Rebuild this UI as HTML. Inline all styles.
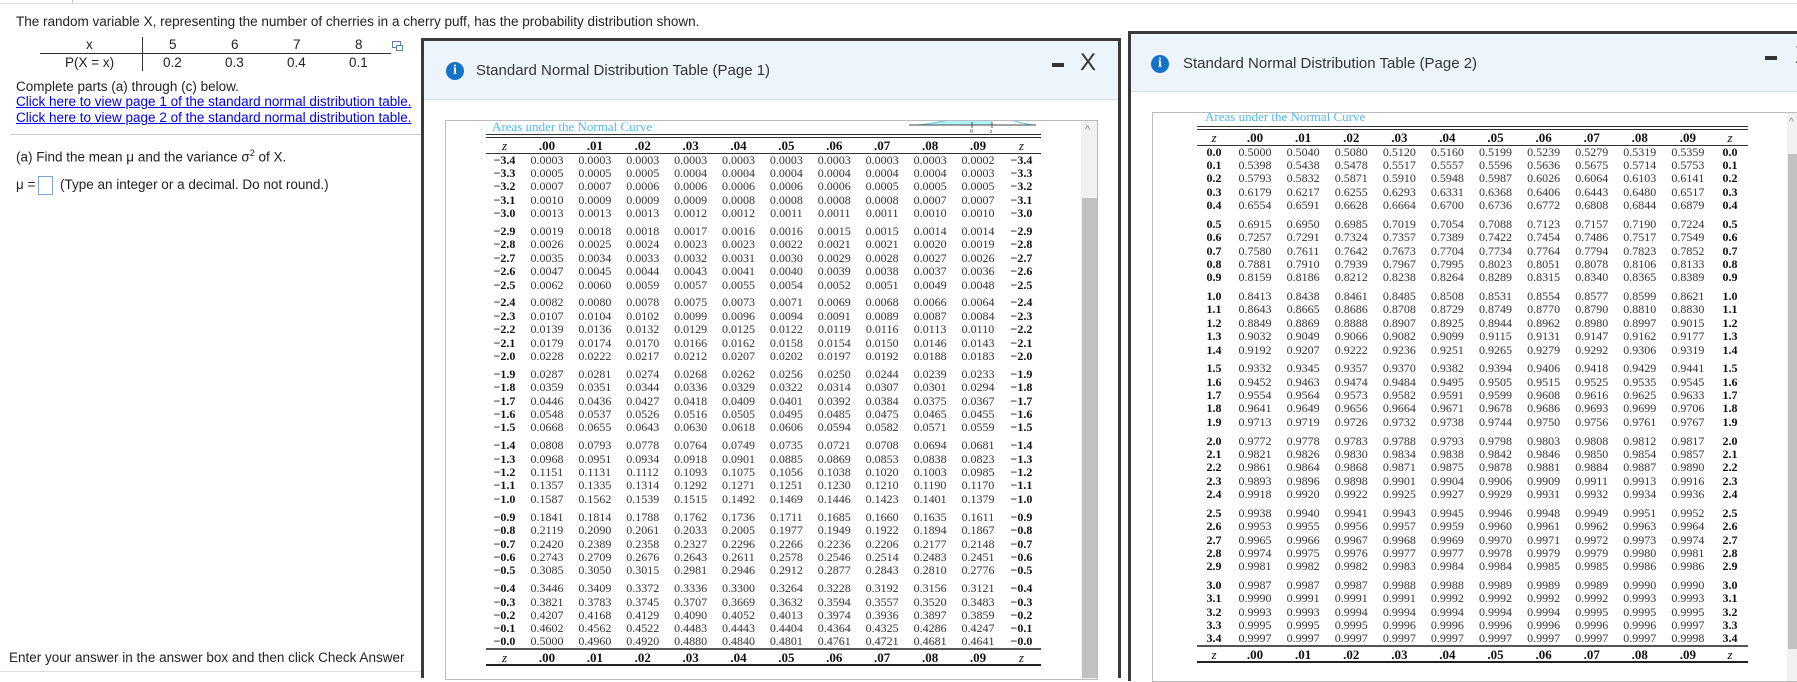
<!DOCTYPE html>
<html><head><meta charset="utf-8"><style>
*{margin:0;padding:0;box-sizing:border-box}
body{width:1797px;height:673px;overflow:hidden;background:#fff;position:relative;font-family:"Liberation Sans",Arial,sans-serif;color:#222}
.a{position:absolute;white-space:nowrap}
.t{font-size:13.5px;line-height:16px}
a{color:#0000ee;text-decoration:underline}
.dlg{position:absolute;background:#fff;border:3px solid #3a3a3a;border-right:none;border-bottom:none;overflow:hidden}
.hdr{position:absolute;left:0;right:0;top:0;background:#eef4fb;border-bottom:1px solid #cfdff0}
.info{position:absolute;width:18px;height:18px;border-radius:50%;background:#1473c9;color:#fff;font:bold 14px/18px "Liberation Serif",serif;text-align:center}
.ttl{position:absolute;font-size:15px;color:#333;white-space:nowrap}
.box{position:absolute;border:1px solid #bbb;overflow:hidden;background:#fff}
table{border-collapse:collapse;table-layout:fixed;position:absolute;font-family:"Liberation Serif",serif;font-size:12px;color:#333}
td{padding:0;height:13.4px;line-height:13px;text-align:center;vertical-align:bottom}
tr.h td{height:17px;font-weight:bold;font-size:13px;color:#111;border-bottom:1px solid #333;vertical-align:middle}
tr.h td.z,tr.f td.z{font-style:italic;font-weight:normal}
tr.f td{height:16px;font-weight:bold;font-size:13px;color:#111;border-top:2px solid #555;border-bottom:2px solid #222;vertical-align:middle}
tr.g td{height:18.7px}
#t1 tr.g td{height:17.9px}
td.z{font-weight:bold;color:#111}
.dbl{border-top:4px double #333}
.areas{position:absolute;font-family:"Liberation Serif",serif;font-size:13px;color:#55b8f0}
.sb{position:absolute;background:#f1f1f1}
.th{position:absolute;background:#c1c1c1}
</style></head><body>

<div class="a" style="left:0;right:0;top:3px;height:1px;background:#ddd;width:1797px"></div>
<div class="a" style="left:72px;top:0;width:1px;height:3px;background:#ccc"></div>

<div class="a t" style="left:16px;top:14px">The random variable X, representing the number of cherries in a cherry puff, has the probability distribution shown.</div>

<div class="a" style="left:40px;top:53px;width:351px;height:1px;background:#333"></div>
<div class="a" style="left:142px;top:37px;width:1px;height:34px;background:#333"></div>
<div class="a t" style="left:86px;top:37px">x</div>
<div class="a t" style="left:65px;top:55px">P(X = x)</div>
<div class="a t" style="left:169px;top:37px">5</div>
<div class="a t" style="left:231px;top:37px">6</div>
<div class="a t" style="left:293px;top:37px">7</div>
<div class="a t" style="left:355px;top:37px">8</div>
<div class="a t" style="left:163px;top:55px">0.2</div>
<div class="a t" style="left:225px;top:55px">0.3</div>
<div class="a t" style="left:287px;top:55px">0.4</div>
<div class="a t" style="left:349px;top:55px">0.1</div>
<div class="a" style="left:392px;top:41px;width:9px;height:7px;border:1.5px solid #5a7fb0"></div>
<div class="a" style="left:396px;top:45px;width:7px;height:6px;border:1.5px solid #5a7fb0;background:#fff"></div>

<div class="a t" style="left:16px;top:79px">Complete parts (a) through (c) below.</div>
<div class="a t" style="left:16px;top:94px"><a>Click here to view page 1 of the standard normal distribution table.</a></div>
<div class="a t" style="left:16px;top:110px"><a>Click here to view page 2 of the standard normal distribution table.</a></div>
<div class="a" style="left:10px;top:134px;width:420px;height:1px;background:#ccc"></div>
<div class="a t" style="left:16px;top:145px">(a) Find the mean μ and the variance σ<sup style="font-size:9px">2</sup> of X.</div>
<div class="a t" style="left:16px;top:177px">μ =</div>
<div class="a" style="left:38px;top:176px;width:15px;height:19px;border:1px solid #7aa7d6"></div>
<div class="a t" style="left:60px;top:177px">(Type an integer or a decimal. Do not round.)</div>
<div class="a t" style="left:9px;top:650px">Enter your answer in the answer box and then click Check Answer</div>
<div class="a" style="left:0;top:671px;width:421px;height:1px;background:#ddd"></div>

<!-- Dialog 1 -->
<div class="dlg" style="left:421px;top:38px;width:700px;height:640px;border-right:3px solid #3a3a3a">
 <div class="hdr" style="height:59px"></div>
 <div class="info" style="left:22px;top:21px">i</div>
 <div class="ttl" style="left:52px;top:21px">Standard Normal Distribution Table (Page 1)</div>
 <div class="a" style="left:628px;top:22px;width:12px;height:4px;background:#333"></div>
 <div class="a" style="left:656px;top:8px;font-size:24px;color:#333">X</div>
</div>
<div class="box" style="left:445px;top:120px;width:653px;height:560px">
 <div class="areas" style="left:46px;top:-2px">Areas under the Normal Curve</div>
 <svg class="a" style="left:460px;top:0" width="140" height="16"><path d="M10 4 C25 3 35 0 45 0 L86 0 L86 4 Z" fill="#aef3fb"/><path d="M10 4 C25 3 35 0 45 -1 M105 -1 C112 1 118 3 128 4" fill="none" stroke="#6cc6e6" stroke-width="1"/><line x1="3" y1="4" x2="130" y2="4" stroke="#444"/><line x1="66" y1="1" x2="66" y2="7" stroke="#555"/><line x1="86" y1="1" x2="86" y2="7" stroke="#555"/><text x="64" y="12" font-size="6" font-family="Liberation Serif" fill="#333">0</text><text x="84" y="12" font-size="6" font-style="italic" font-family="Liberation Serif" fill="#333">z</text></svg>
 <div class="sb" style="left:635px;top:0;width:17px;height:560px"></div>
 <div class="th" style="left:636px;top:77px;width:15px;height:480px"></div>
 <div class="a" style="left:639px;top:3px;font-size:11px;color:#888">^</div>
 <table id="t1" style="left:40px;top:13px;width:555px" class="dbl">
 <colgroup><col style="width:37px"><col span="10" style="width:47.9px"><col style="width:39px"></colgroup>
 <tr class="h"><td class="z">z</td><td>.00</td><td>.01</td><td>.02</td><td>.03</td><td>.04</td><td>.05</td><td>.06</td><td>.07</td><td>.08</td><td>.09</td><td class="z">z</td></tr>
 <tr><td class="z">−3.4</td><td>0.0003</td><td>0.0003</td><td>0.0003</td><td>0.0003</td><td>0.0003</td><td>0.0003</td><td>0.0003</td><td>0.0003</td><td>0.0003</td><td>0.0002</td><td class="z">−3.4</td></tr>
 <tr><td class="z">−3.3</td><td>0.0005</td><td>0.0005</td><td>0.0005</td><td>0.0004</td><td>0.0004</td><td>0.0004</td><td>0.0004</td><td>0.0004</td><td>0.0004</td><td>0.0003</td><td class="z">−3.3</td></tr>
 <tr><td class="z">−3.2</td><td>0.0007</td><td>0.0007</td><td>0.0006</td><td>0.0006</td><td>0.0006</td><td>0.0006</td><td>0.0006</td><td>0.0005</td><td>0.0005</td><td>0.0005</td><td class="z">−3.2</td></tr>
 <tr><td class="z">−3.1</td><td>0.0010</td><td>0.0009</td><td>0.0009</td><td>0.0009</td><td>0.0008</td><td>0.0008</td><td>0.0008</td><td>0.0008</td><td>0.0007</td><td>0.0007</td><td class="z">−3.1</td></tr>
 <tr><td class="z">−3.0</td><td>0.0013</td><td>0.0013</td><td>0.0013</td><td>0.0012</td><td>0.0012</td><td>0.0011</td><td>0.0011</td><td>0.0011</td><td>0.0010</td><td>0.0010</td><td class="z">−3.0</td></tr>
 <tr class="g"><td class="z">−2.9</td><td>0.0019</td><td>0.0018</td><td>0.0018</td><td>0.0017</td><td>0.0016</td><td>0.0016</td><td>0.0015</td><td>0.0015</td><td>0.0014</td><td>0.0014</td><td class="z">−2.9</td></tr>
 <tr><td class="z">−2.8</td><td>0.0026</td><td>0.0025</td><td>0.0024</td><td>0.0023</td><td>0.0023</td><td>0.0022</td><td>0.0021</td><td>0.0021</td><td>0.0020</td><td>0.0019</td><td class="z">−2.8</td></tr>
 <tr><td class="z">−2.7</td><td>0.0035</td><td>0.0034</td><td>0.0033</td><td>0.0032</td><td>0.0031</td><td>0.0030</td><td>0.0029</td><td>0.0028</td><td>0.0027</td><td>0.0026</td><td class="z">−2.7</td></tr>
 <tr><td class="z">−2.6</td><td>0.0047</td><td>0.0045</td><td>0.0044</td><td>0.0043</td><td>0.0041</td><td>0.0040</td><td>0.0039</td><td>0.0038</td><td>0.0037</td><td>0.0036</td><td class="z">−2.6</td></tr>
 <tr><td class="z">−2.5</td><td>0.0062</td><td>0.0060</td><td>0.0059</td><td>0.0057</td><td>0.0055</td><td>0.0054</td><td>0.0052</td><td>0.0051</td><td>0.0049</td><td>0.0048</td><td class="z">−2.5</td></tr>
 <tr class="g"><td class="z">−2.4</td><td>0.0082</td><td>0.0080</td><td>0.0078</td><td>0.0075</td><td>0.0073</td><td>0.0071</td><td>0.0069</td><td>0.0068</td><td>0.0066</td><td>0.0064</td><td class="z">−2.4</td></tr>
 <tr><td class="z">−2.3</td><td>0.0107</td><td>0.0104</td><td>0.0102</td><td>0.0099</td><td>0.0096</td><td>0.0094</td><td>0.0091</td><td>0.0089</td><td>0.0087</td><td>0.0084</td><td class="z">−2.3</td></tr>
 <tr><td class="z">−2.2</td><td>0.0139</td><td>0.0136</td><td>0.0132</td><td>0.0129</td><td>0.0125</td><td>0.0122</td><td>0.0119</td><td>0.0116</td><td>0.0113</td><td>0.0110</td><td class="z">−2.2</td></tr>
 <tr><td class="z">−2.1</td><td>0.0179</td><td>0.0174</td><td>0.0170</td><td>0.0166</td><td>0.0162</td><td>0.0158</td><td>0.0154</td><td>0.0150</td><td>0.0146</td><td>0.0143</td><td class="z">−2.1</td></tr>
 <tr><td class="z">−2.0</td><td>0.0228</td><td>0.0222</td><td>0.0217</td><td>0.0212</td><td>0.0207</td><td>0.0202</td><td>0.0197</td><td>0.0192</td><td>0.0188</td><td>0.0183</td><td class="z">−2.0</td></tr>
 <tr class="g"><td class="z">−1.9</td><td>0.0287</td><td>0.0281</td><td>0.0274</td><td>0.0268</td><td>0.0262</td><td>0.0256</td><td>0.0250</td><td>0.0244</td><td>0.0239</td><td>0.0233</td><td class="z">−1.9</td></tr>
 <tr><td class="z">−1.8</td><td>0.0359</td><td>0.0351</td><td>0.0344</td><td>0.0336</td><td>0.0329</td><td>0.0322</td><td>0.0314</td><td>0.0307</td><td>0.0301</td><td>0.0294</td><td class="z">−1.8</td></tr>
 <tr><td class="z">−1.7</td><td>0.0446</td><td>0.0436</td><td>0.0427</td><td>0.0418</td><td>0.0409</td><td>0.0401</td><td>0.0392</td><td>0.0384</td><td>0.0375</td><td>0.0367</td><td class="z">−1.7</td></tr>
 <tr><td class="z">−1.6</td><td>0.0548</td><td>0.0537</td><td>0.0526</td><td>0.0516</td><td>0.0505</td><td>0.0495</td><td>0.0485</td><td>0.0475</td><td>0.0465</td><td>0.0455</td><td class="z">−1.6</td></tr>
 <tr><td class="z">−1.5</td><td>0.0668</td><td>0.0655</td><td>0.0643</td><td>0.0630</td><td>0.0618</td><td>0.0606</td><td>0.0594</td><td>0.0582</td><td>0.0571</td><td>0.0559</td><td class="z">−1.5</td></tr>
 <tr class="g"><td class="z">−1.4</td><td>0.0808</td><td>0.0793</td><td>0.0778</td><td>0.0764</td><td>0.0749</td><td>0.0735</td><td>0.0721</td><td>0.0708</td><td>0.0694</td><td>0.0681</td><td class="z">−1.4</td></tr>
 <tr><td class="z">−1.3</td><td>0.0968</td><td>0.0951</td><td>0.0934</td><td>0.0918</td><td>0.0901</td><td>0.0885</td><td>0.0869</td><td>0.0853</td><td>0.0838</td><td>0.0823</td><td class="z">−1.3</td></tr>
 <tr><td class="z">−1.2</td><td>0.1151</td><td>0.1131</td><td>0.1112</td><td>0.1093</td><td>0.1075</td><td>0.1056</td><td>0.1038</td><td>0.1020</td><td>0.1003</td><td>0.0985</td><td class="z">−1.2</td></tr>
 <tr><td class="z">−1.1</td><td>0.1357</td><td>0.1335</td><td>0.1314</td><td>0.1292</td><td>0.1271</td><td>0.1251</td><td>0.1230</td><td>0.1210</td><td>0.1190</td><td>0.1170</td><td class="z">−1.1</td></tr>
 <tr><td class="z">−1.0</td><td>0.1587</td><td>0.1562</td><td>0.1539</td><td>0.1515</td><td>0.1492</td><td>0.1469</td><td>0.1446</td><td>0.1423</td><td>0.1401</td><td>0.1379</td><td class="z">−1.0</td></tr>
 <tr class="g"><td class="z">−0.9</td><td>0.1841</td><td>0.1814</td><td>0.1788</td><td>0.1762</td><td>0.1736</td><td>0.1711</td><td>0.1685</td><td>0.1660</td><td>0.1635</td><td>0.1611</td><td class="z">−0.9</td></tr>
 <tr><td class="z">−0.8</td><td>0.2119</td><td>0.2090</td><td>0.2061</td><td>0.2033</td><td>0.2005</td><td>0.1977</td><td>0.1949</td><td>0.1922</td><td>0.1894</td><td>0.1867</td><td class="z">−0.8</td></tr>
 <tr><td class="z">−0.7</td><td>0.2420</td><td>0.2389</td><td>0.2358</td><td>0.2327</td><td>0.2296</td><td>0.2266</td><td>0.2236</td><td>0.2206</td><td>0.2177</td><td>0.2148</td><td class="z">−0.7</td></tr>
 <tr><td class="z">−0.6</td><td>0.2743</td><td>0.2709</td><td>0.2676</td><td>0.2643</td><td>0.2611</td><td>0.2578</td><td>0.2546</td><td>0.2514</td><td>0.2483</td><td>0.2451</td><td class="z">−0.6</td></tr>
 <tr><td class="z">−0.5</td><td>0.3085</td><td>0.3050</td><td>0.3015</td><td>0.2981</td><td>0.2946</td><td>0.2912</td><td>0.2877</td><td>0.2843</td><td>0.2810</td><td>0.2776</td><td class="z">−0.5</td></tr>
 <tr class="g"><td class="z">−0.4</td><td>0.3446</td><td>0.3409</td><td>0.3372</td><td>0.3336</td><td>0.3300</td><td>0.3264</td><td>0.3228</td><td>0.3192</td><td>0.3156</td><td>0.3121</td><td class="z">−0.4</td></tr>
 <tr><td class="z">−0.3</td><td>0.3821</td><td>0.3783</td><td>0.3745</td><td>0.3707</td><td>0.3669</td><td>0.3632</td><td>0.3594</td><td>0.3557</td><td>0.3520</td><td>0.3483</td><td class="z">−0.3</td></tr>
 <tr><td class="z">−0.2</td><td>0.4207</td><td>0.4168</td><td>0.4129</td><td>0.4090</td><td>0.4052</td><td>0.4013</td><td>0.3974</td><td>0.3936</td><td>0.3897</td><td>0.3859</td><td class="z">−0.2</td></tr>
 <tr><td class="z">−0.1</td><td>0.4602</td><td>0.4562</td><td>0.4522</td><td>0.4483</td><td>0.4443</td><td>0.4404</td><td>0.4364</td><td>0.4325</td><td>0.4286</td><td>0.4247</td><td class="z">−0.1</td></tr>
 <tr><td class="z">−0.0</td><td>0.5000</td><td>0.4960</td><td>0.4920</td><td>0.4880</td><td>0.4840</td><td>0.4801</td><td>0.4761</td><td>0.4721</td><td>0.4681</td><td>0.4641</td><td class="z">−0.0</td></tr>
 <tr class="f"><td class="z">z</td><td>.00</td><td>.01</td><td>.02</td><td>.03</td><td>.04</td><td>.05</td><td>.06</td><td>.07</td><td>.08</td><td>.09</td><td class="z">z</td></tr>
 </table>
</div>

<!-- Dialog 2 -->
<div class="dlg" style="left:1128px;top:31px;width:680px;height:650px">
 <div class="hdr" style="height:58px"></div>
 <div class="info" style="left:20px;top:21px">i</div>
 <div class="ttl" style="left:52px;top:21px">Standard Normal Distribution Table (Page 2)</div>
 <div class="a" style="left:634px;top:22px;width:12px;height:4px;background:#333"></div>
 <div class="a" style="left:664px;top:8px;font-size:24px;color:#333">X</div>
</div>
<div class="box" style="left:1152px;top:112px;width:660px;height:570px;border-right:none">
 <div class="areas" style="left:52px;top:-4px">Areas under the Normal Curve</div>
 <div class="sb" style="left:634px;top:0;width:11px;height:570px"></div>
 <div class="th" style="left:635px;top:41px;width:10px;height:495px"></div>
 <div class="a" style="left:636px;top:4px;font-size:10px;color:#888">^</div>
 <table style="left:44px;top:13px;width:551px" class="dbl">
 <colgroup><col style="width:34px"><col span="10" style="width:48.1px"><col style="width:36px"></colgroup>
 <tr class="h"><td class="z">z</td><td>.00</td><td>.01</td><td>.02</td><td>.03</td><td>.04</td><td>.05</td><td>.06</td><td>.07</td><td>.08</td><td>.09</td><td class="z">z</td></tr>
 <tr><td class="z">0.0</td><td>0.5000</td><td>0.5040</td><td>0.5080</td><td>0.5120</td><td>0.5160</td><td>0.5199</td><td>0.5239</td><td>0.5279</td><td>0.5319</td><td>0.5359</td><td class="z">0.0</td></tr>
 <tr><td class="z">0.1</td><td>0.5398</td><td>0.5438</td><td>0.5478</td><td>0.5517</td><td>0.5557</td><td>0.5596</td><td>0.5636</td><td>0.5675</td><td>0.5714</td><td>0.5753</td><td class="z">0.1</td></tr>
 <tr><td class="z">0.2</td><td>0.5793</td><td>0.5832</td><td>0.5871</td><td>0.5910</td><td>0.5948</td><td>0.5987</td><td>0.6026</td><td>0.6064</td><td>0.6103</td><td>0.6141</td><td class="z">0.2</td></tr>
 <tr><td class="z">0.3</td><td>0.6179</td><td>0.6217</td><td>0.6255</td><td>0.6293</td><td>0.6331</td><td>0.6368</td><td>0.6406</td><td>0.6443</td><td>0.6480</td><td>0.6517</td><td class="z">0.3</td></tr>
 <tr><td class="z">0.4</td><td>0.6554</td><td>0.6591</td><td>0.6628</td><td>0.6664</td><td>0.6700</td><td>0.6736</td><td>0.6772</td><td>0.6808</td><td>0.6844</td><td>0.6879</td><td class="z">0.4</td></tr>
 <tr class="g"><td class="z">0.5</td><td>0.6915</td><td>0.6950</td><td>0.6985</td><td>0.7019</td><td>0.7054</td><td>0.7088</td><td>0.7123</td><td>0.7157</td><td>0.7190</td><td>0.7224</td><td class="z">0.5</td></tr>
 <tr><td class="z">0.6</td><td>0.7257</td><td>0.7291</td><td>0.7324</td><td>0.7357</td><td>0.7389</td><td>0.7422</td><td>0.7454</td><td>0.7486</td><td>0.7517</td><td>0.7549</td><td class="z">0.6</td></tr>
 <tr><td class="z">0.7</td><td>0.7580</td><td>0.7611</td><td>0.7642</td><td>0.7673</td><td>0.7704</td><td>0.7734</td><td>0.7764</td><td>0.7794</td><td>0.7823</td><td>0.7852</td><td class="z">0.7</td></tr>
 <tr><td class="z">0.8</td><td>0.7881</td><td>0.7910</td><td>0.7939</td><td>0.7967</td><td>0.7995</td><td>0.8023</td><td>0.8051</td><td>0.8078</td><td>0.8106</td><td>0.8133</td><td class="z">0.8</td></tr>
 <tr><td class="z">0.9</td><td>0.8159</td><td>0.8186</td><td>0.8212</td><td>0.8238</td><td>0.8264</td><td>0.8289</td><td>0.8315</td><td>0.8340</td><td>0.8365</td><td>0.8389</td><td class="z">0.9</td></tr>
 <tr class="g"><td class="z">1.0</td><td>0.8413</td><td>0.8438</td><td>0.8461</td><td>0.8485</td><td>0.8508</td><td>0.8531</td><td>0.8554</td><td>0.8577</td><td>0.8599</td><td>0.8621</td><td class="z">1.0</td></tr>
 <tr><td class="z">1.1</td><td>0.8643</td><td>0.8665</td><td>0.8686</td><td>0.8708</td><td>0.8729</td><td>0.8749</td><td>0.8770</td><td>0.8790</td><td>0.8810</td><td>0.8830</td><td class="z">1.1</td></tr>
 <tr><td class="z">1.2</td><td>0.8849</td><td>0.8869</td><td>0.8888</td><td>0.8907</td><td>0.8925</td><td>0.8944</td><td>0.8962</td><td>0.8980</td><td>0.8997</td><td>0.9015</td><td class="z">1.2</td></tr>
 <tr><td class="z">1.3</td><td>0.9032</td><td>0.9049</td><td>0.9066</td><td>0.9082</td><td>0.9099</td><td>0.9115</td><td>0.9131</td><td>0.9147</td><td>0.9162</td><td>0.9177</td><td class="z">1.3</td></tr>
 <tr><td class="z">1.4</td><td>0.9192</td><td>0.9207</td><td>0.9222</td><td>0.9236</td><td>0.9251</td><td>0.9265</td><td>0.9279</td><td>0.9292</td><td>0.9306</td><td>0.9319</td><td class="z">1.4</td></tr>
 <tr class="g"><td class="z">1.5</td><td>0.9332</td><td>0.9345</td><td>0.9357</td><td>0.9370</td><td>0.9382</td><td>0.9394</td><td>0.9406</td><td>0.9418</td><td>0.9429</td><td>0.9441</td><td class="z">1.5</td></tr>
 <tr><td class="z">1.6</td><td>0.9452</td><td>0.9463</td><td>0.9474</td><td>0.9484</td><td>0.9495</td><td>0.9505</td><td>0.9515</td><td>0.9525</td><td>0.9535</td><td>0.9545</td><td class="z">1.6</td></tr>
 <tr><td class="z">1.7</td><td>0.9554</td><td>0.9564</td><td>0.9573</td><td>0.9582</td><td>0.9591</td><td>0.9599</td><td>0.9608</td><td>0.9616</td><td>0.9625</td><td>0.9633</td><td class="z">1.7</td></tr>
 <tr><td class="z">1.8</td><td>0.9641</td><td>0.9649</td><td>0.9656</td><td>0.9664</td><td>0.9671</td><td>0.9678</td><td>0.9686</td><td>0.9693</td><td>0.9699</td><td>0.9706</td><td class="z">1.8</td></tr>
 <tr><td class="z">1.9</td><td>0.9713</td><td>0.9719</td><td>0.9726</td><td>0.9732</td><td>0.9738</td><td>0.9744</td><td>0.9750</td><td>0.9756</td><td>0.9761</td><td>0.9767</td><td class="z">1.9</td></tr>
 <tr class="g"><td class="z">2.0</td><td>0.9772</td><td>0.9778</td><td>0.9783</td><td>0.9788</td><td>0.9793</td><td>0.9798</td><td>0.9803</td><td>0.9808</td><td>0.9812</td><td>0.9817</td><td class="z">2.0</td></tr>
 <tr><td class="z">2.1</td><td>0.9821</td><td>0.9826</td><td>0.9830</td><td>0.9834</td><td>0.9838</td><td>0.9842</td><td>0.9846</td><td>0.9850</td><td>0.9854</td><td>0.9857</td><td class="z">2.1</td></tr>
 <tr><td class="z">2.2</td><td>0.9861</td><td>0.9864</td><td>0.9868</td><td>0.9871</td><td>0.9875</td><td>0.9878</td><td>0.9881</td><td>0.9884</td><td>0.9887</td><td>0.9890</td><td class="z">2.2</td></tr>
 <tr><td class="z">2.3</td><td>0.9893</td><td>0.9896</td><td>0.9898</td><td>0.9901</td><td>0.9904</td><td>0.9906</td><td>0.9909</td><td>0.9911</td><td>0.9913</td><td>0.9916</td><td class="z">2.3</td></tr>
 <tr><td class="z">2.4</td><td>0.9918</td><td>0.9920</td><td>0.9922</td><td>0.9925</td><td>0.9927</td><td>0.9929</td><td>0.9931</td><td>0.9932</td><td>0.9934</td><td>0.9936</td><td class="z">2.4</td></tr>
 <tr class="g"><td class="z">2.5</td><td>0.9938</td><td>0.9940</td><td>0.9941</td><td>0.9943</td><td>0.9945</td><td>0.9946</td><td>0.9948</td><td>0.9949</td><td>0.9951</td><td>0.9952</td><td class="z">2.5</td></tr>
 <tr><td class="z">2.6</td><td>0.9953</td><td>0.9955</td><td>0.9956</td><td>0.9957</td><td>0.9959</td><td>0.9960</td><td>0.9961</td><td>0.9962</td><td>0.9963</td><td>0.9964</td><td class="z">2.6</td></tr>
 <tr><td class="z">2.7</td><td>0.9965</td><td>0.9966</td><td>0.9967</td><td>0.9968</td><td>0.9969</td><td>0.9970</td><td>0.9971</td><td>0.9972</td><td>0.9973</td><td>0.9974</td><td class="z">2.7</td></tr>
 <tr><td class="z">2.8</td><td>0.9974</td><td>0.9975</td><td>0.9976</td><td>0.9977</td><td>0.9977</td><td>0.9978</td><td>0.9979</td><td>0.9979</td><td>0.9980</td><td>0.9981</td><td class="z">2.8</td></tr>
 <tr><td class="z">2.9</td><td>0.9981</td><td>0.9982</td><td>0.9982</td><td>0.9983</td><td>0.9984</td><td>0.9984</td><td>0.9985</td><td>0.9985</td><td>0.9986</td><td>0.9986</td><td class="z">2.9</td></tr>
 <tr class="g"><td class="z">3.0</td><td>0.9987</td><td>0.9987</td><td>0.9987</td><td>0.9988</td><td>0.9988</td><td>0.9989</td><td>0.9989</td><td>0.9989</td><td>0.9990</td><td>0.9990</td><td class="z">3.0</td></tr>
 <tr><td class="z">3.1</td><td>0.9990</td><td>0.9991</td><td>0.9991</td><td>0.9991</td><td>0.9992</td><td>0.9992</td><td>0.9992</td><td>0.9992</td><td>0.9993</td><td>0.9993</td><td class="z">3.1</td></tr>
 <tr><td class="z">3.2</td><td>0.9993</td><td>0.9993</td><td>0.9994</td><td>0.9994</td><td>0.9994</td><td>0.9994</td><td>0.9994</td><td>0.9995</td><td>0.9995</td><td>0.9995</td><td class="z">3.2</td></tr>
 <tr><td class="z">3.3</td><td>0.9995</td><td>0.9995</td><td>0.9995</td><td>0.9996</td><td>0.9996</td><td>0.9996</td><td>0.9996</td><td>0.9996</td><td>0.9996</td><td>0.9997</td><td class="z">3.3</td></tr>
 <tr><td class="z">3.4</td><td>0.9997</td><td>0.9997</td><td>0.9997</td><td>0.9997</td><td>0.9997</td><td>0.9997</td><td>0.9997</td><td>0.9997</td><td>0.9997</td><td>0.9998</td><td class="z">3.4</td></tr>
 <tr class="f"><td class="z">z</td><td>.00</td><td>.01</td><td>.02</td><td>.03</td><td>.04</td><td>.05</td><td>.06</td><td>.07</td><td>.08</td><td>.09</td><td class="z">z</td></tr>
 </table>
</div>
</body></html>
